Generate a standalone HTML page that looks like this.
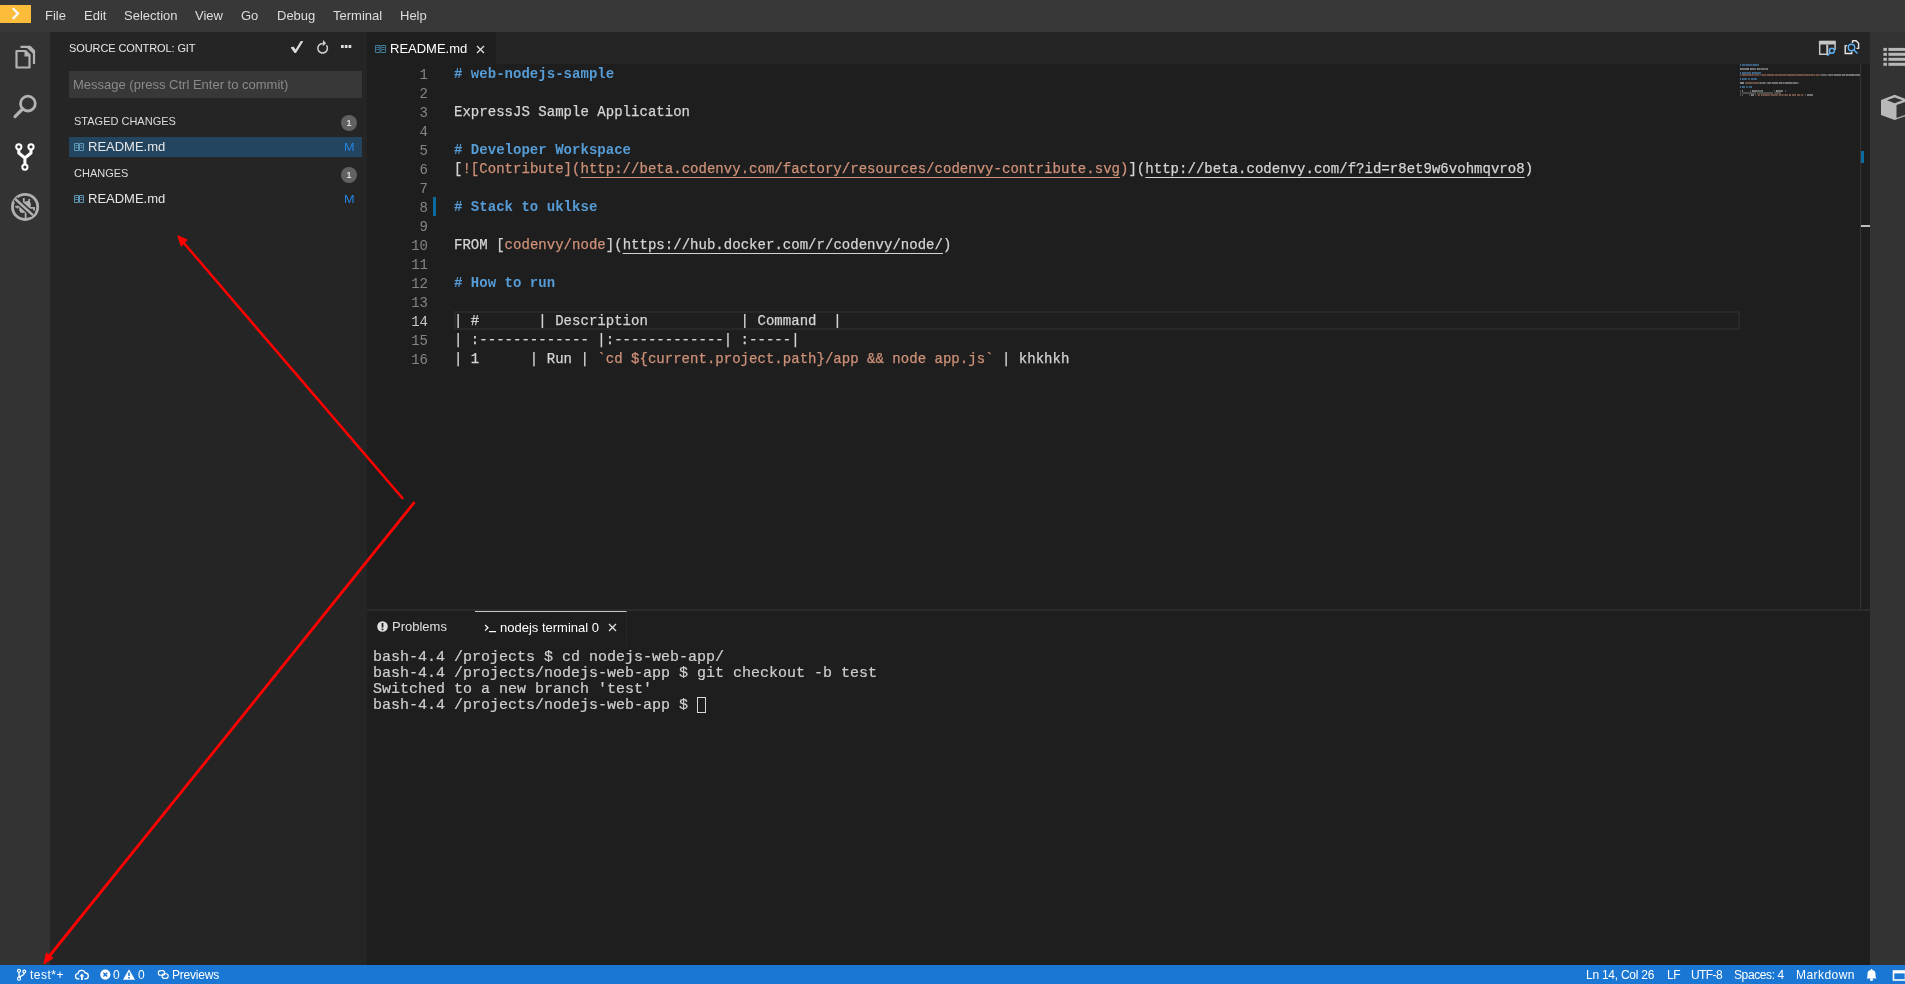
<!DOCTYPE html>
<html><head><meta charset="utf-8"><title>Theia</title>
<style>
*{margin:0;padding:0;box-sizing:border-box}
html,body{-webkit-font-smoothing:antialiased;width:1905px;height:984px;overflow:hidden;background:#1e1e1e;font-family:"Liberation Sans",sans-serif;color:#cccccc}
.abs{position:absolute}
#menubar{left:0;top:0;width:1905px;height:32px;background:#383838}
.mi{position:absolute;top:0;height:32px;line-height:32px;font-size:13px;color:#dddddd;white-space:nowrap}
#logo{left:0;top:5px;width:31px;height:18px;background:#fdbc3a}
#actbar{left:0;top:32px;width:50px;height:933px;background:#333333}
#sidebar{left:50px;top:32px;width:317px;height:933px;background:#252526}
#tabbar{left:367px;top:32px;width:1503px;height:32px;background:#252526}
#tab{left:367px;top:32px;width:129px;height:32px;background:#1e1e1e}
#editor{left:367px;top:64px;width:1503px;height:545px;background:#1e1e1e}
#rbar{left:1870px;top:32px;width:35px;height:933px;background:#333333}
#panel{left:367px;top:609px;width:1503px;height:356px;background:#1e1e1e;border-top:2px solid #2b2b2b}
#status{left:0;top:965px;width:1905px;height:19px;background:#1b77d4}
.code{position:absolute;left:454px;letter-spacing:0.0287px;-webkit-text-stroke:0.25px currentColor;padding-top:1px;font-family:"Liberation Mono",monospace;font-size:14px;line-height:19px;height:19px;white-space:pre;color:#d4d4d4}
.ln{position:absolute;left:380px;padding-top:2px;width:48px;text-align:right;font-family:"Liberation Mono",monospace;font-size:14px;line-height:19px;height:19px;color:#858585}
.h{color:#569cd6;font-weight:bold;-webkit-text-stroke:0}
.o{color:#ce9178}
.u{text-decoration:underline;text-underline-offset:4px}
.cur{color:#c6c6c6}
.term{position:absolute;left:373px;-webkit-text-stroke:0.2px #d8d8d8;font-family:"Liberation Mono",monospace;font-size:15px;line-height:16px;height:16px;white-space:pre;color:#cccccc}
.badge{width:16px;height:16px;border-radius:8px;background:#616161;color:#dcdcdc;font-size:9px;font-weight:bold;text-align:center;line-height:16px}
.st{position:absolute;top:966px;height:19px;line-height:19px;font-size:12px;color:#ffffff;white-space:nowrap}
</style></head>
<body>
<div id="root" style="position:absolute;left:0;top:0;width:1905px;height:984px;will-change:transform">
<div id="menubar" class="abs"></div>
<svg class="abs" style="left:0;top:5px" width="31" height="18" viewBox="0 0 31 18"><rect width="31" height="18" fill="#fdbc3a"/><path d="M12.8 3.3 L18 8.6 L12.8 13.9" fill="none" stroke="#f6f6f6" stroke-width="2.3"/></svg>
<div class="mi" style="left:45px">File</div>
<div class="mi" style="left:84px">Edit</div>
<div class="mi" style="left:124px">Selection</div>
<div class="mi" style="left:195px">View</div>
<div class="mi" style="left:241px">Go</div>
<div class="mi" style="left:277px">Debug</div>
<div class="mi" style="left:333px">Terminal</div>
<div class="mi" style="left:400px">Help</div>

<div id="actbar" class="abs"></div>
<div id="sidebar" class="abs"></div>
<div id="tabbar" class="abs"></div>
<div id="tab" class="abs"></div>
<div id="editor" class="abs"></div>
<div id="rbar" class="abs"></div>
<div id="panel" class="abs"></div>
<div id="status" class="abs"></div>

<!-- ACTBAR -->
<svg class="abs" style="left:0;top:32px" width="50" height="200" viewBox="0 0 50 200">
 <!-- files -->
 <path d="M20.5 14.8 H30 L34 19 V32" fill="none" stroke="#b3b3b3" stroke-width="2.2"/>
 <path d="M28.8 13.7 L35.2 19.6 L32.8 21.5 L26.5 15.5 Z" fill="#b3b3b3"/>
 <path d="M16.5 19 H25.5 L29.5 23 V35.5 H16.5 Z" fill="none" stroke="#b3b3b3" stroke-width="2.2" stroke-linejoin="round"/>
 <path d="M24.5 18.5 V24.5 H30.2 Z" fill="#b3b3b3"/>
 <!-- search -->
 <circle cx="27.9" cy="71.6" r="7.4" fill="none" stroke="#b3b3b3" stroke-width="2.8"/>
 <path d="M22.6 77 L15 84.6" stroke="#b3b3b3" stroke-width="3.2" stroke-linecap="round"/>
 <!-- scm -->
 <circle cx="18.8" cy="114.8" r="2.6" fill="none" stroke="#ffffff" stroke-width="2"/>
 <circle cx="31" cy="114.8" r="2.6" fill="none" stroke="#ffffff" stroke-width="2"/>
 <circle cx="24.9" cy="135.1" r="2.6" fill="none" stroke="#ffffff" stroke-width="2"/>
 <path d="M18.8 117.5 V121 L24.9 126 L31 121 V117.5 M24.9 126 V132.5" fill="none" stroke="#ffffff" stroke-width="3" stroke-linejoin="round"/>
 <!-- debug -->
 <circle cx="25.1" cy="174.9" r="12.6" fill="none" stroke="#b0b0b0" stroke-width="2.8"/>
 <ellipse cx="25" cy="175" rx="4.6" ry="7" transform="rotate(45 25 175)" fill="#b0b0b0"/>
 <path d="M23.8 166 V171.5 M29.5 167 L28.5 171 M15.2 174.6 H20.5 M28.5 175.8 H34 V178.5 M25.6 178 V186 M17.5 174.6 V176.5" fill="none" stroke="#b0b0b0" stroke-width="1.8"/>
 <path d="M15.3 167 L32.9 183.1" stroke="#333333" stroke-width="5.5"/>
 <path d="M15.3 167 L32.9 183.1" stroke="#b0b0b0" stroke-width="2.4"/>
</svg>
<!-- RIGHT BAR -->
<svg class="abs" style="left:1870px;top:32px" width="35" height="100" viewBox="0 0 35 100">
 <rect x="13.4" y="15.9" width="3.5" height="3" fill="#b8b8b8"/><rect x="18.4" y="15.9" width="17" height="3" fill="#b8b8b8"/>
 <rect x="13.4" y="20.8" width="3.5" height="3" fill="#b8b8b8"/><rect x="18.4" y="20.8" width="17" height="3" fill="#b8b8b8"/>
 <rect x="13.4" y="25.8" width="3.5" height="3" fill="#b8b8b8"/><rect x="18.4" y="25.8" width="17" height="3" fill="#b8b8b8"/>
 <rect x="13.4" y="30.8" width="3.5" height="3" fill="#b8b8b8"/><rect x="18.4" y="30.8" width="17" height="3" fill="#b8b8b8"/>
 <path d="M11 68 L24.7 62.8 L38 68 V83 L24.7 88 L11 83 Z" fill="#b8b8b8"/>
 <path d="M17 68.3 L24.7 65.5 L32.5 68.3 L24.7 71.2 Z" fill="#333333"/>
 <path d="M26.5 73 L38 68.8 V82 L26.5 86 Z" fill="#333333"/>
</svg>
<!-- SIDEBAR -->
<div class="abs" style="left:69px;top:32px;height:32px;line-height:32px;font-size:11px;color:#e8e8e8;white-space:nowrap;letter-spacing:-0.1px">SOURCE CONTROL: GIT</div>
<svg class="abs" style="left:286px;top:38px" width="70" height="20" viewBox="0 0 70 20">
 <path d="M4.6 9.6 L7.4 8.5 L9.6 11.6 L14.8 3 L17.3 3.3 L10 15 L8.6 15 Z" fill="#dcdcdc"/>
 <path d="M36.7 5.4 A4.8 4.8 0 1 0 40.4 7.2" fill="none" stroke="#cfcfcf" stroke-width="1.5"/>
 <path d="M37 2 L40.2 5.3 L36.8 8.2 Z" fill="#cfcfcf"/>
 <rect x="55" y="7" width="2.7" height="3" fill="#e0e0e0"/><rect x="58.8" y="7" width="2.7" height="3" fill="#e0e0e0"/><rect x="62.6" y="7" width="2.7" height="3" fill="#e0e0e0"/>
</svg>
<div class="abs" style="left:69px;top:71px;width:293px;height:27px;background:#383838"></div>
<div class="abs" style="left:73px;top:71px;height:27px;line-height:27px;font-size:13px;color:#8a8a8a;white-space:nowrap">Message (press Ctrl Enter to commit)</div>
<div class="abs" style="left:74px;top:112px;height:18px;line-height:18px;font-size:11px;color:#dcdcdc;white-space:nowrap">STAGED CHANGES</div>
<div class="abs badge" style="left:341px;top:115px">1</div>
<div class="abs" style="left:69px;top:137px;width:293px;height:20px;background:#234560"></div>
<svg class="abs fico" style="left:74px;top:143px" width="10" height="8" viewBox="0 0 10 8"><path d="M0.5 0.5h4v7h-4zM5.5 0.5h4v7h-4z" fill="none" stroke="#5d97b3" stroke-width="1"/><path d="M1.5 2.5h2M1.5 4.5h2M6.5 2.5h2M6.5 4.5h2" stroke="#5d97b3" stroke-width="1"/></svg>
<div class="abs" style="left:88px;top:137px;height:20px;line-height:20px;font-size:13px;color:#e6e6e6;white-space:nowrap">README.md</div>
<div class="abs" style="left:344px;top:137px;height:20px;line-height:20px;font-size:11px;color:#2585e0;white-space:nowrap;transform:scaleX(1.15);transform-origin:left">M</div>
<div class="abs" style="left:74px;top:164px;height:18px;line-height:18px;font-size:11px;color:#dcdcdc;white-space:nowrap">CHANGES</div>
<div class="abs badge" style="left:341px;top:167px">1</div>
<svg class="abs fico" style="left:74px;top:195px" width="10" height="8" viewBox="0 0 10 8"><path d="M0.5 0.5h4v7h-4zM5.5 0.5h4v7h-4z" fill="none" stroke="#5d97b3" stroke-width="1"/><path d="M1.5 2.5h2M1.5 4.5h2M6.5 2.5h2M6.5 4.5h2" stroke="#5d97b3" stroke-width="1"/></svg>
<div class="abs" style="left:88px;top:189px;height:20px;line-height:20px;font-size:13px;color:#e6e6e6;white-space:nowrap">README.md</div>
<div class="abs" style="left:344px;top:189px;height:20px;line-height:20px;font-size:11px;color:#2585e0;white-space:nowrap;transform:scaleX(1.15);transform-origin:left">M</div>

<!-- TAB -->
<svg class="abs fico" style="left:375px;top:45px" width="11" height="8" viewBox="0 0 11 8"><path d="M0.5 0.5h4.5v7h-4.5zM6 0.5h4.5v7h-4.5z" fill="none" stroke="#3f7b97" stroke-width="1"/><path d="M1.5 2.5h2.5M1.5 4.5h2.5M7 2.5h2.5M7 4.5h2.5" stroke="#3f7b97" stroke-width="1"/></svg>
<div class="abs" style="left:390px;top:33px;height:32px;line-height:32px;font-size:13px;color:#ffffff;white-space:nowrap">README.md</div>
<svg class="abs" style="left:476px;top:45px" width="9" height="9" viewBox="0 0 9 9"><path d="M1 1 L8 8 M8 1 L1 8" stroke="#e0e0e0" stroke-width="1.3"/></svg>
<svg class="abs" style="left:1815px;top:36px" width="50" height="24" viewBox="0 0 50 24">
 <path d="M4.9 5.5 H20.1 V14" fill="none" stroke="#c6c6c6" stroke-width="1.5"/>
 <rect x="3.9" y="4.9" width="16.2" height="3.6" fill="#c6c6c6"/>
 <path d="M4.7 5 V18.3 H12.5 V8.5 M12 8.5 V18" fill="none" stroke="#c6c6c6" stroke-width="1.5"/>
 <circle cx="16.9" cy="14.8" r="2.5" fill="none" stroke="#5fb0f5" stroke-width="1.4"/>
 <path d="M15.1 16.7 L12.3 19.9" stroke="#5fb0f5" stroke-width="1.4"/>
 <path d="M37.5 4.8 H41 L43.6 7.3 V12.4 H41.5 M30.5 9.6 H32.2 M30.2 9.3 V17.5 H36.7 V15.5" fill="none" stroke="#e6e6e6" stroke-width="1.4"/>
 <path d="M37.5 4.5 V7" stroke="#e6e6e6" stroke-width="1.4"/>
 <circle cx="36.5" cy="11.4" r="3.2" fill="none" stroke="#5fb0f5" stroke-width="1.4"/>
 <path d="M38.8 13.8 L42.5 17.5" stroke="#5fb0f5" stroke-width="1.4"/>
</svg>
<!-- EDITOR -->
<div class="ln" style="top:64px">1</div>
<div class="code" style="top:64px"><span class="h"># web-nodejs-sample</span></div>
<div class="ln" style="top:83px">2</div>
<div class="ln" style="top:102px">3</div>
<div class="code" style="top:102px">ExpressJS Sample Application</div>
<div class="ln" style="top:121px">4</div>
<div class="ln" style="top:140px">5</div>
<div class="code" style="top:140px"><span class="h"># Developer Workspace</span></div>
<div class="ln" style="top:159px">6</div>
<div class="code" style="top:159px">[<span class="o">![Contribute](</span><span class="o u">http://beta.codenvy.com/factory/resources/codenvy-contribute.svg</span><span class="o">)</span>](<span class="u">http://beta.codenvy.com/f?id=r8et9w6vohmqvro8</span>)</div>
<div class="ln" style="top:178px">7</div>
<div class="ln" style="top:197px">8</div>
<div class="code" style="top:197px"><span class="h"># Stack to uklkse</span></div>
<div class="ln" style="top:216px">9</div>
<div class="ln" style="top:235px">10</div>
<div class="code" style="top:235px">FROM [<span class="o">codenvy/node</span>](<span class="u">https://hub.docker.com/r/codenvy/node/</span>)</div>
<div class="ln" style="top:254px">11</div>
<div class="ln" style="top:273px">12</div>
<div class="code" style="top:273px"><span class="h"># How to run</span></div>
<div class="ln" style="top:292px">13</div>
<div class="ln cur" style="top:311px">14</div>
<div class="code" style="top:311px">| #       | Description           | Command  |</div>
<div class="ln" style="top:330px">15</div>
<div class="code" style="top:330px">| :------------- |:-------------| :-----|</div>
<div class="ln" style="top:349px">16</div>
<div class="code" style="top:349px">| 1      | Run | <span class="o">`cd ${current.project.path}/app &amp;&amp; node app.js`</span> | khkhkh</div>
<div class="abs" style="left:433px;top:197px;width:3px;height:19px;background:#0c6b9e"></div>
<div class="abs" style="left:454px;top:311px;width:1286px;height:19px;border:2px solid #282828"></div>
<div class="abs" style="left:1860px;top:64px;width:1px;height:545px;background:#333333"></div>
<div class="abs" style="left:1861px;top:151px;width:3px;height:12px;background:#0c6b9e"></div>
<div class="abs" style="left:1861px;top:225px;width:9px;height:2px;background:#bdbdbd"></div>
<!-- MINIMAP --><svg class="abs" style="left:1740px;top:64px;opacity:0.75" width="120" height="34" viewBox="0 0 120 34" shape-rendering="crispEdges"><rect x="0" y="0" width="1" height="2" fill="#569cd6" fill-opacity="0.86"/><rect x="2" y="0" width="1" height="2" fill="#569cd6" fill-opacity="0.69"/><rect x="3" y="0" width="1" height="2" fill="#569cd6" fill-opacity="0.69"/><rect x="4" y="0" width="1" height="2" fill="#569cd6" fill-opacity="0.69"/><rect x="5" y="0" width="1" height="2" fill="#569cd6" fill-opacity="0.40"/><rect x="6" y="0" width="1" height="2" fill="#569cd6" fill-opacity="0.69"/><rect x="7" y="0" width="1" height="2" fill="#569cd6" fill-opacity="0.69"/><rect x="8" y="0" width="1" height="2" fill="#569cd6" fill-opacity="0.69"/><rect x="9" y="0" width="1" height="2" fill="#569cd6" fill-opacity="0.69"/><rect x="10" y="0" width="1" height="2" fill="#569cd6" fill-opacity="0.52"/><rect x="11" y="0" width="1" height="2" fill="#569cd6" fill-opacity="0.69"/><rect x="12" y="0" width="1" height="2" fill="#569cd6" fill-opacity="0.40"/><rect x="13" y="0" width="1" height="2" fill="#569cd6" fill-opacity="0.69"/><rect x="14" y="0" width="1" height="2" fill="#569cd6" fill-opacity="0.69"/><rect x="15" y="0" width="1" height="2" fill="#569cd6" fill-opacity="0.69"/><rect x="16" y="0" width="1" height="2" fill="#569cd6" fill-opacity="0.69"/><rect x="17" y="0" width="1" height="2" fill="#569cd6" fill-opacity="0.52"/><rect x="18" y="0" width="1" height="2" fill="#569cd6" fill-opacity="0.69"/><rect x="0" y="4" width="1" height="2" fill="#d4d4d4" fill-opacity="0.75"/><rect x="1" y="4" width="1" height="2" fill="#d4d4d4" fill-opacity="0.60"/><rect x="2" y="4" width="1" height="2" fill="#d4d4d4" fill-opacity="0.60"/><rect x="3" y="4" width="1" height="2" fill="#d4d4d4" fill-opacity="0.60"/><rect x="4" y="4" width="1" height="2" fill="#d4d4d4" fill-opacity="0.60"/><rect x="5" y="4" width="1" height="2" fill="#d4d4d4" fill-opacity="0.60"/><rect x="6" y="4" width="1" height="2" fill="#d4d4d4" fill-opacity="0.60"/><rect x="7" y="4" width="1" height="2" fill="#d4d4d4" fill-opacity="0.75"/><rect x="8" y="4" width="1" height="2" fill="#d4d4d4" fill-opacity="0.75"/><rect x="10" y="4" width="1" height="2" fill="#d4d4d4" fill-opacity="0.75"/><rect x="11" y="4" width="1" height="2" fill="#d4d4d4" fill-opacity="0.60"/><rect x="12" y="4" width="1" height="2" fill="#d4d4d4" fill-opacity="0.60"/><rect x="13" y="4" width="1" height="2" fill="#d4d4d4" fill-opacity="0.60"/><rect x="14" y="4" width="1" height="2" fill="#d4d4d4" fill-opacity="0.45"/><rect x="15" y="4" width="1" height="2" fill="#d4d4d4" fill-opacity="0.60"/><rect x="17" y="4" width="1" height="2" fill="#d4d4d4" fill-opacity="0.75"/><rect x="18" y="4" width="1" height="2" fill="#d4d4d4" fill-opacity="0.60"/><rect x="19" y="4" width="1" height="2" fill="#d4d4d4" fill-opacity="0.60"/><rect x="20" y="4" width="1" height="2" fill="#d4d4d4" fill-opacity="0.45"/><rect x="21" y="4" width="1" height="2" fill="#d4d4d4" fill-opacity="0.45"/><rect x="22" y="4" width="1" height="2" fill="#d4d4d4" fill-opacity="0.60"/><rect x="23" y="4" width="1" height="2" fill="#d4d4d4" fill-opacity="0.60"/><rect x="24" y="4" width="1" height="2" fill="#d4d4d4" fill-opacity="0.45"/><rect x="25" y="4" width="1" height="2" fill="#d4d4d4" fill-opacity="0.45"/><rect x="26" y="4" width="1" height="2" fill="#d4d4d4" fill-opacity="0.60"/><rect x="27" y="4" width="1" height="2" fill="#d4d4d4" fill-opacity="0.60"/><rect x="0" y="8" width="1" height="2" fill="#569cd6" fill-opacity="0.86"/><rect x="2" y="8" width="1" height="2" fill="#569cd6" fill-opacity="0.86"/><rect x="3" y="8" width="1" height="2" fill="#569cd6" fill-opacity="0.69"/><rect x="4" y="8" width="1" height="2" fill="#569cd6" fill-opacity="0.69"/><rect x="5" y="8" width="1" height="2" fill="#569cd6" fill-opacity="0.69"/><rect x="6" y="8" width="1" height="2" fill="#569cd6" fill-opacity="0.52"/><rect x="7" y="8" width="1" height="2" fill="#569cd6" fill-opacity="0.69"/><rect x="8" y="8" width="1" height="2" fill="#569cd6" fill-opacity="0.69"/><rect x="9" y="8" width="1" height="2" fill="#569cd6" fill-opacity="0.69"/><rect x="10" y="8" width="1" height="2" fill="#569cd6" fill-opacity="0.69"/><rect x="12" y="8" width="1" height="2" fill="#569cd6" fill-opacity="0.86"/><rect x="13" y="8" width="1" height="2" fill="#569cd6" fill-opacity="0.69"/><rect x="14" y="8" width="1" height="2" fill="#569cd6" fill-opacity="0.69"/><rect x="15" y="8" width="1" height="2" fill="#569cd6" fill-opacity="0.69"/><rect x="16" y="8" width="1" height="2" fill="#569cd6" fill-opacity="0.69"/><rect x="17" y="8" width="1" height="2" fill="#569cd6" fill-opacity="0.69"/><rect x="18" y="8" width="1" height="2" fill="#569cd6" fill-opacity="0.69"/><rect x="19" y="8" width="1" height="2" fill="#569cd6" fill-opacity="0.69"/><rect x="20" y="8" width="1" height="2" fill="#569cd6" fill-opacity="0.69"/><rect x="0" y="10" width="1" height="2" fill="#d4d4d4" fill-opacity="0.35"/><rect x="1" y="10" width="1" height="2" fill="#ce9178" fill-opacity="0.35"/><rect x="2" y="10" width="1" height="2" fill="#ce9178" fill-opacity="0.35"/><rect x="3" y="10" width="1" height="2" fill="#ce9178" fill-opacity="0.75"/><rect x="4" y="10" width="1" height="2" fill="#ce9178" fill-opacity="0.60"/><rect x="5" y="10" width="1" height="2" fill="#ce9178" fill-opacity="0.60"/><rect x="6" y="10" width="1" height="2" fill="#ce9178" fill-opacity="0.45"/><rect x="7" y="10" width="1" height="2" fill="#ce9178" fill-opacity="0.60"/><rect x="8" y="10" width="1" height="2" fill="#ce9178" fill-opacity="0.45"/><rect x="9" y="10" width="1" height="2" fill="#ce9178" fill-opacity="0.60"/><rect x="10" y="10" width="1" height="2" fill="#ce9178" fill-opacity="0.60"/><rect x="11" y="10" width="1" height="2" fill="#ce9178" fill-opacity="0.45"/><rect x="12" y="10" width="1" height="2" fill="#ce9178" fill-opacity="0.60"/><rect x="13" y="10" width="1" height="2" fill="#ce9178" fill-opacity="0.35"/><rect x="14" y="10" width="1" height="2" fill="#ce9178" fill-opacity="0.35"/><rect x="15" y="10" width="1" height="2" fill="#ce9178" fill-opacity="0.60"/><rect x="16" y="10" width="1" height="2" fill="#ce9178" fill-opacity="0.45"/><rect x="17" y="10" width="1" height="2" fill="#ce9178" fill-opacity="0.45"/><rect x="18" y="10" width="1" height="2" fill="#ce9178" fill-opacity="0.60"/><rect x="19" y="10" width="1" height="2" fill="#ce9178" fill-opacity="0.22"/><rect x="20" y="10" width="1" height="2" fill="#ce9178" fill-opacity="0.35"/><rect x="21" y="10" width="1" height="2" fill="#ce9178" fill-opacity="0.35"/><rect x="22" y="10" width="1" height="2" fill="#ce9178" fill-opacity="0.60"/><rect x="23" y="10" width="1" height="2" fill="#ce9178" fill-opacity="0.60"/><rect x="24" y="10" width="1" height="2" fill="#ce9178" fill-opacity="0.45"/><rect x="25" y="10" width="1" height="2" fill="#ce9178" fill-opacity="0.60"/><rect x="26" y="10" width="1" height="2" fill="#ce9178" fill-opacity="0.22"/><rect x="27" y="10" width="1" height="2" fill="#ce9178" fill-opacity="0.60"/><rect x="28" y="10" width="1" height="2" fill="#ce9178" fill-opacity="0.60"/><rect x="29" y="10" width="1" height="2" fill="#ce9178" fill-opacity="0.60"/><rect x="30" y="10" width="1" height="2" fill="#ce9178" fill-opacity="0.60"/><rect x="31" y="10" width="1" height="2" fill="#ce9178" fill-opacity="0.60"/><rect x="32" y="10" width="1" height="2" fill="#ce9178" fill-opacity="0.60"/><rect x="33" y="10" width="1" height="2" fill="#ce9178" fill-opacity="0.60"/><rect x="34" y="10" width="1" height="2" fill="#ce9178" fill-opacity="0.22"/><rect x="35" y="10" width="1" height="2" fill="#ce9178" fill-opacity="0.60"/><rect x="36" y="10" width="1" height="2" fill="#ce9178" fill-opacity="0.60"/><rect x="37" y="10" width="1" height="2" fill="#ce9178" fill-opacity="0.60"/><rect x="38" y="10" width="1" height="2" fill="#ce9178" fill-opacity="0.35"/><rect x="39" y="10" width="1" height="2" fill="#ce9178" fill-opacity="0.60"/><rect x="40" y="10" width="1" height="2" fill="#ce9178" fill-opacity="0.60"/><rect x="41" y="10" width="1" height="2" fill="#ce9178" fill-opacity="0.60"/><rect x="42" y="10" width="1" height="2" fill="#ce9178" fill-opacity="0.45"/><rect x="43" y="10" width="1" height="2" fill="#ce9178" fill-opacity="0.60"/><rect x="44" y="10" width="1" height="2" fill="#ce9178" fill-opacity="0.60"/><rect x="45" y="10" width="1" height="2" fill="#ce9178" fill-opacity="0.60"/><rect x="46" y="10" width="1" height="2" fill="#ce9178" fill-opacity="0.35"/><rect x="47" y="10" width="1" height="2" fill="#ce9178" fill-opacity="0.60"/><rect x="48" y="10" width="1" height="2" fill="#ce9178" fill-opacity="0.60"/><rect x="49" y="10" width="1" height="2" fill="#ce9178" fill-opacity="0.60"/><rect x="50" y="10" width="1" height="2" fill="#ce9178" fill-opacity="0.60"/><rect x="51" y="10" width="1" height="2" fill="#ce9178" fill-opacity="0.60"/><rect x="52" y="10" width="1" height="2" fill="#ce9178" fill-opacity="0.60"/><rect x="53" y="10" width="1" height="2" fill="#ce9178" fill-opacity="0.60"/><rect x="54" y="10" width="1" height="2" fill="#ce9178" fill-opacity="0.60"/><rect x="55" y="10" width="1" height="2" fill="#ce9178" fill-opacity="0.60"/><rect x="56" y="10" width="1" height="2" fill="#ce9178" fill-opacity="0.35"/><rect x="57" y="10" width="1" height="2" fill="#ce9178" fill-opacity="0.60"/><rect x="58" y="10" width="1" height="2" fill="#ce9178" fill-opacity="0.60"/><rect x="59" y="10" width="1" height="2" fill="#ce9178" fill-opacity="0.60"/><rect x="60" y="10" width="1" height="2" fill="#ce9178" fill-opacity="0.60"/><rect x="61" y="10" width="1" height="2" fill="#ce9178" fill-opacity="0.60"/><rect x="62" y="10" width="1" height="2" fill="#ce9178" fill-opacity="0.60"/><rect x="63" y="10" width="1" height="2" fill="#ce9178" fill-opacity="0.60"/><rect x="64" y="10" width="1" height="2" fill="#ce9178" fill-opacity="0.35"/><rect x="65" y="10" width="1" height="2" fill="#ce9178" fill-opacity="0.60"/><rect x="66" y="10" width="1" height="2" fill="#ce9178" fill-opacity="0.60"/><rect x="67" y="10" width="1" height="2" fill="#ce9178" fill-opacity="0.60"/><rect x="68" y="10" width="1" height="2" fill="#ce9178" fill-opacity="0.45"/><rect x="69" y="10" width="1" height="2" fill="#ce9178" fill-opacity="0.60"/><rect x="70" y="10" width="1" height="2" fill="#ce9178" fill-opacity="0.45"/><rect x="71" y="10" width="1" height="2" fill="#ce9178" fill-opacity="0.60"/><rect x="72" y="10" width="1" height="2" fill="#ce9178" fill-opacity="0.60"/><rect x="73" y="10" width="1" height="2" fill="#ce9178" fill-opacity="0.45"/><rect x="74" y="10" width="1" height="2" fill="#ce9178" fill-opacity="0.60"/><rect x="75" y="10" width="1" height="2" fill="#ce9178" fill-opacity="0.22"/><rect x="76" y="10" width="1" height="2" fill="#ce9178" fill-opacity="0.60"/><rect x="77" y="10" width="1" height="2" fill="#ce9178" fill-opacity="0.60"/><rect x="78" y="10" width="1" height="2" fill="#ce9178" fill-opacity="0.60"/><rect x="79" y="10" width="1" height="2" fill="#ce9178" fill-opacity="0.35"/><rect x="80" y="10" width="1" height="2" fill="#d4d4d4" fill-opacity="0.35"/><rect x="81" y="10" width="1" height="2" fill="#d4d4d4" fill-opacity="0.35"/><rect x="82" y="10" width="1" height="2" fill="#d4d4d4" fill-opacity="0.60"/><rect x="83" y="10" width="1" height="2" fill="#d4d4d4" fill-opacity="0.45"/><rect x="84" y="10" width="1" height="2" fill="#d4d4d4" fill-opacity="0.45"/><rect x="85" y="10" width="1" height="2" fill="#d4d4d4" fill-opacity="0.60"/><rect x="86" y="10" width="1" height="2" fill="#d4d4d4" fill-opacity="0.22"/><rect x="87" y="10" width="1" height="2" fill="#d4d4d4" fill-opacity="0.35"/><rect x="88" y="10" width="1" height="2" fill="#d4d4d4" fill-opacity="0.35"/><rect x="89" y="10" width="1" height="2" fill="#d4d4d4" fill-opacity="0.60"/><rect x="90" y="10" width="1" height="2" fill="#d4d4d4" fill-opacity="0.60"/><rect x="91" y="10" width="1" height="2" fill="#d4d4d4" fill-opacity="0.45"/><rect x="92" y="10" width="1" height="2" fill="#d4d4d4" fill-opacity="0.60"/><rect x="93" y="10" width="1" height="2" fill="#d4d4d4" fill-opacity="0.22"/><rect x="94" y="10" width="1" height="2" fill="#d4d4d4" fill-opacity="0.60"/><rect x="95" y="10" width="1" height="2" fill="#d4d4d4" fill-opacity="0.60"/><rect x="96" y="10" width="1" height="2" fill="#d4d4d4" fill-opacity="0.60"/><rect x="97" y="10" width="1" height="2" fill="#d4d4d4" fill-opacity="0.60"/><rect x="98" y="10" width="1" height="2" fill="#d4d4d4" fill-opacity="0.60"/><rect x="99" y="10" width="1" height="2" fill="#d4d4d4" fill-opacity="0.60"/><rect x="100" y="10" width="1" height="2" fill="#d4d4d4" fill-opacity="0.60"/><rect x="101" y="10" width="1" height="2" fill="#d4d4d4" fill-opacity="0.22"/><rect x="102" y="10" width="1" height="2" fill="#d4d4d4" fill-opacity="0.60"/><rect x="103" y="10" width="1" height="2" fill="#d4d4d4" fill-opacity="0.60"/><rect x="104" y="10" width="1" height="2" fill="#d4d4d4" fill-opacity="0.60"/><rect x="105" y="10" width="1" height="2" fill="#d4d4d4" fill-opacity="0.35"/><rect x="106" y="10" width="1" height="2" fill="#d4d4d4" fill-opacity="0.60"/><rect x="107" y="10" width="1" height="2" fill="#d4d4d4" fill-opacity="0.60"/><rect x="108" y="10" width="1" height="2" fill="#d4d4d4" fill-opacity="0.45"/><rect x="109" y="10" width="1" height="2" fill="#d4d4d4" fill-opacity="0.60"/><rect x="110" y="10" width="1" height="2" fill="#d4d4d4" fill-opacity="0.60"/><rect x="111" y="10" width="1" height="2" fill="#d4d4d4" fill-opacity="0.60"/><rect x="112" y="10" width="1" height="2" fill="#d4d4d4" fill-opacity="0.75"/><rect x="113" y="10" width="1" height="2" fill="#d4d4d4" fill-opacity="0.60"/><rect x="114" y="10" width="1" height="2" fill="#d4d4d4" fill-opacity="0.45"/><rect x="115" y="10" width="1" height="2" fill="#d4d4d4" fill-opacity="0.60"/><rect x="116" y="10" width="1" height="2" fill="#d4d4d4" fill-opacity="0.60"/><rect x="117" y="10" width="1" height="2" fill="#d4d4d4" fill-opacity="0.60"/><rect x="118" y="10" width="1" height="2" fill="#d4d4d4" fill-opacity="0.60"/><rect x="119" y="10" width="1" height="2" fill="#d4d4d4" fill-opacity="0.60"/><rect x="120" y="10" width="1" height="2" fill="#d4d4d4" fill-opacity="0.60"/><rect x="121" y="10" width="1" height="2" fill="#d4d4d4" fill-opacity="0.60"/><rect x="122" y="10" width="1" height="2" fill="#d4d4d4" fill-opacity="0.60"/><rect x="123" y="10" width="1" height="2" fill="#d4d4d4" fill-opacity="0.60"/><rect x="124" y="10" width="1" height="2" fill="#d4d4d4" fill-opacity="0.60"/><rect x="125" y="10" width="1" height="2" fill="#d4d4d4" fill-opacity="0.60"/><rect x="126" y="10" width="1" height="2" fill="#d4d4d4" fill-opacity="0.75"/><rect x="127" y="10" width="1" height="2" fill="#d4d4d4" fill-opacity="0.35"/><rect x="0" y="14" width="1" height="2" fill="#569cd6" fill-opacity="0.86"/><rect x="2" y="14" width="1" height="2" fill="#569cd6" fill-opacity="0.86"/><rect x="3" y="14" width="1" height="2" fill="#569cd6" fill-opacity="0.52"/><rect x="4" y="14" width="1" height="2" fill="#569cd6" fill-opacity="0.69"/><rect x="5" y="14" width="1" height="2" fill="#569cd6" fill-opacity="0.69"/><rect x="6" y="14" width="1" height="2" fill="#569cd6" fill-opacity="0.69"/><rect x="8" y="14" width="1" height="2" fill="#569cd6" fill-opacity="0.52"/><rect x="9" y="14" width="1" height="2" fill="#569cd6" fill-opacity="0.69"/><rect x="11" y="14" width="1" height="2" fill="#569cd6" fill-opacity="0.69"/><rect x="12" y="14" width="1" height="2" fill="#569cd6" fill-opacity="0.69"/><rect x="13" y="14" width="1" height="2" fill="#569cd6" fill-opacity="0.52"/><rect x="14" y="14" width="1" height="2" fill="#569cd6" fill-opacity="0.69"/><rect x="15" y="14" width="1" height="2" fill="#569cd6" fill-opacity="0.69"/><rect x="16" y="14" width="1" height="2" fill="#569cd6" fill-opacity="0.69"/><rect x="0" y="18" width="1" height="2" fill="#d4d4d4" fill-opacity="0.75"/><rect x="1" y="18" width="1" height="2" fill="#d4d4d4" fill-opacity="0.75"/><rect x="2" y="18" width="1" height="2" fill="#d4d4d4" fill-opacity="0.75"/><rect x="3" y="18" width="1" height="2" fill="#d4d4d4" fill-opacity="0.75"/><rect x="5" y="18" width="1" height="2" fill="#d4d4d4" fill-opacity="0.35"/><rect x="6" y="18" width="1" height="2" fill="#ce9178" fill-opacity="0.60"/><rect x="7" y="18" width="1" height="2" fill="#ce9178" fill-opacity="0.60"/><rect x="8" y="18" width="1" height="2" fill="#ce9178" fill-opacity="0.60"/><rect x="9" y="18" width="1" height="2" fill="#ce9178" fill-opacity="0.60"/><rect x="10" y="18" width="1" height="2" fill="#ce9178" fill-opacity="0.60"/><rect x="11" y="18" width="1" height="2" fill="#ce9178" fill-opacity="0.60"/><rect x="12" y="18" width="1" height="2" fill="#ce9178" fill-opacity="0.60"/><rect x="13" y="18" width="1" height="2" fill="#ce9178" fill-opacity="0.35"/><rect x="14" y="18" width="1" height="2" fill="#ce9178" fill-opacity="0.60"/><rect x="15" y="18" width="1" height="2" fill="#ce9178" fill-opacity="0.60"/><rect x="16" y="18" width="1" height="2" fill="#ce9178" fill-opacity="0.60"/><rect x="17" y="18" width="1" height="2" fill="#ce9178" fill-opacity="0.60"/><rect x="18" y="18" width="1" height="2" fill="#d4d4d4" fill-opacity="0.35"/><rect x="19" y="18" width="1" height="2" fill="#d4d4d4" fill-opacity="0.35"/><rect x="20" y="18" width="1" height="2" fill="#d4d4d4" fill-opacity="0.60"/><rect x="21" y="18" width="1" height="2" fill="#d4d4d4" fill-opacity="0.45"/><rect x="22" y="18" width="1" height="2" fill="#d4d4d4" fill-opacity="0.45"/><rect x="23" y="18" width="1" height="2" fill="#d4d4d4" fill-opacity="0.60"/><rect x="24" y="18" width="1" height="2" fill="#d4d4d4" fill-opacity="0.60"/><rect x="25" y="18" width="1" height="2" fill="#d4d4d4" fill-opacity="0.22"/><rect x="26" y="18" width="1" height="2" fill="#d4d4d4" fill-opacity="0.35"/><rect x="27" y="18" width="1" height="2" fill="#d4d4d4" fill-opacity="0.35"/><rect x="28" y="18" width="1" height="2" fill="#d4d4d4" fill-opacity="0.60"/><rect x="29" y="18" width="1" height="2" fill="#d4d4d4" fill-opacity="0.60"/><rect x="30" y="18" width="1" height="2" fill="#d4d4d4" fill-opacity="0.60"/><rect x="31" y="18" width="1" height="2" fill="#d4d4d4" fill-opacity="0.22"/><rect x="32" y="18" width="1" height="2" fill="#d4d4d4" fill-opacity="0.60"/><rect x="33" y="18" width="1" height="2" fill="#d4d4d4" fill-opacity="0.60"/><rect x="34" y="18" width="1" height="2" fill="#d4d4d4" fill-opacity="0.60"/><rect x="35" y="18" width="1" height="2" fill="#d4d4d4" fill-opacity="0.60"/><rect x="36" y="18" width="1" height="2" fill="#d4d4d4" fill-opacity="0.60"/><rect x="37" y="18" width="1" height="2" fill="#d4d4d4" fill-opacity="0.60"/><rect x="38" y="18" width="1" height="2" fill="#d4d4d4" fill-opacity="0.22"/><rect x="39" y="18" width="1" height="2" fill="#d4d4d4" fill-opacity="0.60"/><rect x="40" y="18" width="1" height="2" fill="#d4d4d4" fill-opacity="0.60"/><rect x="41" y="18" width="1" height="2" fill="#d4d4d4" fill-opacity="0.60"/><rect x="42" y="18" width="1" height="2" fill="#d4d4d4" fill-opacity="0.35"/><rect x="43" y="18" width="1" height="2" fill="#d4d4d4" fill-opacity="0.60"/><rect x="44" y="18" width="1" height="2" fill="#d4d4d4" fill-opacity="0.35"/><rect x="45" y="18" width="1" height="2" fill="#d4d4d4" fill-opacity="0.60"/><rect x="46" y="18" width="1" height="2" fill="#d4d4d4" fill-opacity="0.60"/><rect x="47" y="18" width="1" height="2" fill="#d4d4d4" fill-opacity="0.60"/><rect x="48" y="18" width="1" height="2" fill="#d4d4d4" fill-opacity="0.60"/><rect x="49" y="18" width="1" height="2" fill="#d4d4d4" fill-opacity="0.60"/><rect x="50" y="18" width="1" height="2" fill="#d4d4d4" fill-opacity="0.60"/><rect x="51" y="18" width="1" height="2" fill="#d4d4d4" fill-opacity="0.60"/><rect x="52" y="18" width="1" height="2" fill="#d4d4d4" fill-opacity="0.35"/><rect x="53" y="18" width="1" height="2" fill="#d4d4d4" fill-opacity="0.60"/><rect x="54" y="18" width="1" height="2" fill="#d4d4d4" fill-opacity="0.60"/><rect x="55" y="18" width="1" height="2" fill="#d4d4d4" fill-opacity="0.60"/><rect x="56" y="18" width="1" height="2" fill="#d4d4d4" fill-opacity="0.60"/><rect x="57" y="18" width="1" height="2" fill="#d4d4d4" fill-opacity="0.35"/><rect x="58" y="18" width="1" height="2" fill="#d4d4d4" fill-opacity="0.35"/><rect x="0" y="22" width="1" height="2" fill="#569cd6" fill-opacity="0.86"/><rect x="2" y="22" width="1" height="2" fill="#569cd6" fill-opacity="0.86"/><rect x="3" y="22" width="1" height="2" fill="#569cd6" fill-opacity="0.69"/><rect x="4" y="22" width="1" height="2" fill="#569cd6" fill-opacity="0.69"/><rect x="6" y="22" width="1" height="2" fill="#569cd6" fill-opacity="0.52"/><rect x="7" y="22" width="1" height="2" fill="#569cd6" fill-opacity="0.69"/><rect x="9" y="22" width="1" height="2" fill="#569cd6" fill-opacity="0.69"/><rect x="10" y="22" width="1" height="2" fill="#569cd6" fill-opacity="0.69"/><rect x="11" y="22" width="1" height="2" fill="#569cd6" fill-opacity="0.69"/><rect x="0" y="26" width="1" height="2" fill="#d4d4d4" fill-opacity="0.35"/><rect x="2" y="26" width="1" height="2" fill="#d4d4d4" fill-opacity="0.75"/><rect x="10" y="26" width="1" height="2" fill="#d4d4d4" fill-opacity="0.35"/><rect x="12" y="26" width="1" height="2" fill="#d4d4d4" fill-opacity="0.75"/><rect x="13" y="26" width="1" height="2" fill="#d4d4d4" fill-opacity="0.60"/><rect x="14" y="26" width="1" height="2" fill="#d4d4d4" fill-opacity="0.60"/><rect x="15" y="26" width="1" height="2" fill="#d4d4d4" fill-opacity="0.60"/><rect x="16" y="26" width="1" height="2" fill="#d4d4d4" fill-opacity="0.60"/><rect x="17" y="26" width="1" height="2" fill="#d4d4d4" fill-opacity="0.45"/><rect x="18" y="26" width="1" height="2" fill="#d4d4d4" fill-opacity="0.60"/><rect x="19" y="26" width="1" height="2" fill="#d4d4d4" fill-opacity="0.45"/><rect x="20" y="26" width="1" height="2" fill="#d4d4d4" fill-opacity="0.45"/><rect x="21" y="26" width="1" height="2" fill="#d4d4d4" fill-opacity="0.60"/><rect x="22" y="26" width="1" height="2" fill="#d4d4d4" fill-opacity="0.60"/><rect x="34" y="26" width="1" height="2" fill="#d4d4d4" fill-opacity="0.35"/><rect x="36" y="26" width="1" height="2" fill="#d4d4d4" fill-opacity="0.75"/><rect x="37" y="26" width="1" height="2" fill="#d4d4d4" fill-opacity="0.60"/><rect x="38" y="26" width="1" height="2" fill="#d4d4d4" fill-opacity="0.60"/><rect x="39" y="26" width="1" height="2" fill="#d4d4d4" fill-opacity="0.60"/><rect x="40" y="26" width="1" height="2" fill="#d4d4d4" fill-opacity="0.60"/><rect x="41" y="26" width="1" height="2" fill="#d4d4d4" fill-opacity="0.60"/><rect x="42" y="26" width="1" height="2" fill="#d4d4d4" fill-opacity="0.60"/><rect x="45" y="26" width="1" height="2" fill="#d4d4d4" fill-opacity="0.35"/><rect x="0" y="28" width="1" height="2" fill="#d4d4d4" fill-opacity="0.35"/><rect x="2" y="28" width="1" height="2" fill="#d4d4d4" fill-opacity="0.22"/><rect x="3" y="28" width="1" height="2" fill="#d4d4d4" fill-opacity="0.35"/><rect x="4" y="28" width="1" height="2" fill="#d4d4d4" fill-opacity="0.35"/><rect x="5" y="28" width="1" height="2" fill="#d4d4d4" fill-opacity="0.35"/><rect x="6" y="28" width="1" height="2" fill="#d4d4d4" fill-opacity="0.35"/><rect x="7" y="28" width="1" height="2" fill="#d4d4d4" fill-opacity="0.35"/><rect x="8" y="28" width="1" height="2" fill="#d4d4d4" fill-opacity="0.35"/><rect x="9" y="28" width="1" height="2" fill="#d4d4d4" fill-opacity="0.35"/><rect x="10" y="28" width="1" height="2" fill="#d4d4d4" fill-opacity="0.35"/><rect x="11" y="28" width="1" height="2" fill="#d4d4d4" fill-opacity="0.35"/><rect x="12" y="28" width="1" height="2" fill="#d4d4d4" fill-opacity="0.35"/><rect x="13" y="28" width="1" height="2" fill="#d4d4d4" fill-opacity="0.35"/><rect x="14" y="28" width="1" height="2" fill="#d4d4d4" fill-opacity="0.35"/><rect x="15" y="28" width="1" height="2" fill="#d4d4d4" fill-opacity="0.35"/><rect x="17" y="28" width="1" height="2" fill="#d4d4d4" fill-opacity="0.35"/><rect x="18" y="28" width="1" height="2" fill="#d4d4d4" fill-opacity="0.22"/><rect x="19" y="28" width="1" height="2" fill="#d4d4d4" fill-opacity="0.35"/><rect x="20" y="28" width="1" height="2" fill="#d4d4d4" fill-opacity="0.35"/><rect x="21" y="28" width="1" height="2" fill="#d4d4d4" fill-opacity="0.35"/><rect x="22" y="28" width="1" height="2" fill="#d4d4d4" fill-opacity="0.35"/><rect x="23" y="28" width="1" height="2" fill="#d4d4d4" fill-opacity="0.35"/><rect x="24" y="28" width="1" height="2" fill="#d4d4d4" fill-opacity="0.35"/><rect x="25" y="28" width="1" height="2" fill="#d4d4d4" fill-opacity="0.35"/><rect x="26" y="28" width="1" height="2" fill="#d4d4d4" fill-opacity="0.35"/><rect x="27" y="28" width="1" height="2" fill="#d4d4d4" fill-opacity="0.35"/><rect x="28" y="28" width="1" height="2" fill="#d4d4d4" fill-opacity="0.35"/><rect x="29" y="28" width="1" height="2" fill="#d4d4d4" fill-opacity="0.35"/><rect x="30" y="28" width="1" height="2" fill="#d4d4d4" fill-opacity="0.35"/><rect x="31" y="28" width="1" height="2" fill="#d4d4d4" fill-opacity="0.35"/><rect x="32" y="28" width="1" height="2" fill="#d4d4d4" fill-opacity="0.35"/><rect x="34" y="28" width="1" height="2" fill="#d4d4d4" fill-opacity="0.22"/><rect x="35" y="28" width="1" height="2" fill="#d4d4d4" fill-opacity="0.35"/><rect x="36" y="28" width="1" height="2" fill="#d4d4d4" fill-opacity="0.35"/><rect x="37" y="28" width="1" height="2" fill="#d4d4d4" fill-opacity="0.35"/><rect x="38" y="28" width="1" height="2" fill="#d4d4d4" fill-opacity="0.35"/><rect x="39" y="28" width="1" height="2" fill="#d4d4d4" fill-opacity="0.35"/><rect x="40" y="28" width="1" height="2" fill="#d4d4d4" fill-opacity="0.35"/><rect x="0" y="30" width="1" height="2" fill="#d4d4d4" fill-opacity="0.35"/><rect x="2" y="30" width="1" height="2" fill="#d4d4d4" fill-opacity="0.45"/><rect x="9" y="30" width="1" height="2" fill="#d4d4d4" fill-opacity="0.35"/><rect x="11" y="30" width="1" height="2" fill="#d4d4d4" fill-opacity="0.75"/><rect x="12" y="30" width="1" height="2" fill="#d4d4d4" fill-opacity="0.60"/><rect x="13" y="30" width="1" height="2" fill="#d4d4d4" fill-opacity="0.60"/><rect x="15" y="30" width="1" height="2" fill="#d4d4d4" fill-opacity="0.35"/><rect x="17" y="30" width="1" height="2" fill="#ce9178" fill-opacity="0.22"/><rect x="18" y="30" width="1" height="2" fill="#ce9178" fill-opacity="0.60"/><rect x="19" y="30" width="1" height="2" fill="#ce9178" fill-opacity="0.60"/><rect x="21" y="30" width="1" height="2" fill="#ce9178" fill-opacity="0.75"/><rect x="22" y="30" width="1" height="2" fill="#ce9178" fill-opacity="0.35"/><rect x="23" y="30" width="1" height="2" fill="#ce9178" fill-opacity="0.60"/><rect x="24" y="30" width="1" height="2" fill="#ce9178" fill-opacity="0.60"/><rect x="25" y="30" width="1" height="2" fill="#ce9178" fill-opacity="0.60"/><rect x="26" y="30" width="1" height="2" fill="#ce9178" fill-opacity="0.60"/><rect x="27" y="30" width="1" height="2" fill="#ce9178" fill-opacity="0.60"/><rect x="28" y="30" width="1" height="2" fill="#ce9178" fill-opacity="0.60"/><rect x="29" y="30" width="1" height="2" fill="#ce9178" fill-opacity="0.45"/><rect x="30" y="30" width="1" height="2" fill="#ce9178" fill-opacity="0.22"/><rect x="31" y="30" width="1" height="2" fill="#ce9178" fill-opacity="0.60"/><rect x="32" y="30" width="1" height="2" fill="#ce9178" fill-opacity="0.60"/><rect x="33" y="30" width="1" height="2" fill="#ce9178" fill-opacity="0.60"/><rect x="34" y="30" width="1" height="2" fill="#ce9178" fill-opacity="0.45"/><rect x="35" y="30" width="1" height="2" fill="#ce9178" fill-opacity="0.60"/><rect x="36" y="30" width="1" height="2" fill="#ce9178" fill-opacity="0.60"/><rect x="37" y="30" width="1" height="2" fill="#ce9178" fill-opacity="0.45"/><rect x="38" y="30" width="1" height="2" fill="#ce9178" fill-opacity="0.22"/><rect x="39" y="30" width="1" height="2" fill="#ce9178" fill-opacity="0.60"/><rect x="40" y="30" width="1" height="2" fill="#ce9178" fill-opacity="0.60"/><rect x="41" y="30" width="1" height="2" fill="#ce9178" fill-opacity="0.45"/><rect x="42" y="30" width="1" height="2" fill="#ce9178" fill-opacity="0.60"/><rect x="43" y="30" width="1" height="2" fill="#ce9178" fill-opacity="0.35"/><rect x="44" y="30" width="1" height="2" fill="#ce9178" fill-opacity="0.35"/><rect x="45" y="30" width="1" height="2" fill="#ce9178" fill-opacity="0.60"/><rect x="46" y="30" width="1" height="2" fill="#ce9178" fill-opacity="0.60"/><rect x="47" y="30" width="1" height="2" fill="#ce9178" fill-opacity="0.60"/><rect x="49" y="30" width="1" height="2" fill="#ce9178" fill-opacity="0.75"/><rect x="50" y="30" width="1" height="2" fill="#ce9178" fill-opacity="0.75"/><rect x="52" y="30" width="1" height="2" fill="#ce9178" fill-opacity="0.60"/><rect x="53" y="30" width="1" height="2" fill="#ce9178" fill-opacity="0.60"/><rect x="54" y="30" width="1" height="2" fill="#ce9178" fill-opacity="0.60"/><rect x="55" y="30" width="1" height="2" fill="#ce9178" fill-opacity="0.60"/><rect x="57" y="30" width="1" height="2" fill="#ce9178" fill-opacity="0.60"/><rect x="58" y="30" width="1" height="2" fill="#ce9178" fill-opacity="0.60"/><rect x="59" y="30" width="1" height="2" fill="#ce9178" fill-opacity="0.60"/><rect x="60" y="30" width="1" height="2" fill="#ce9178" fill-opacity="0.22"/><rect x="61" y="30" width="1" height="2" fill="#ce9178" fill-opacity="0.45"/><rect x="62" y="30" width="1" height="2" fill="#ce9178" fill-opacity="0.60"/><rect x="63" y="30" width="1" height="2" fill="#ce9178" fill-opacity="0.22"/><rect x="65" y="30" width="1" height="2" fill="#d4d4d4" fill-opacity="0.35"/><rect x="67" y="30" width="1" height="2" fill="#d4d4d4" fill-opacity="0.60"/><rect x="68" y="30" width="1" height="2" fill="#d4d4d4" fill-opacity="0.60"/><rect x="69" y="30" width="1" height="2" fill="#d4d4d4" fill-opacity="0.60"/><rect x="70" y="30" width="1" height="2" fill="#d4d4d4" fill-opacity="0.60"/><rect x="71" y="30" width="1" height="2" fill="#d4d4d4" fill-opacity="0.60"/><rect x="72" y="30" width="1" height="2" fill="#d4d4d4" fill-opacity="0.60"/></svg>
<!-- /EDITOR -->
<!-- PANEL -->
<div class="abs" style="left:475px;top:611px;width:152px;height:34px;border-top:1px solid #c8c8c8;border-right:1px solid #262626"></div>
<svg class="abs" style="left:377px;top:621px" width="11" height="11" viewBox="0 0 11 11"><circle cx="5.5" cy="5.5" r="5.3" fill="#e0e0e0"/><rect x="4.6" y="2" width="1.8" height="4.6" fill="#1e1e1e"/><rect x="4.6" y="7.6" width="1.8" height="1.6" fill="#1e1e1e"/></svg>
<div class="abs" style="left:392px;top:612px;height:30px;line-height:30px;font-size:13px;color:#e0e0e0;white-space:nowrap">Problems</div>
<svg class="abs" style="left:484px;top:622px" width="13" height="11" viewBox="0 0 13 11"><path d="M1 3 L4 5.8 L1 8.6" fill="none" stroke="#ffffff" stroke-width="1.2"/><path d="M5 9.6 H12" stroke="#ffffff" stroke-width="1.2"/></svg>
<div class="abs" style="left:500px;top:613px;height:30px;line-height:30px;font-size:13px;color:#ffffff;white-space:nowrap">nodejs terminal 0</div>
<svg class="abs" style="left:608px;top:623px" width="9" height="9" viewBox="0 0 9 9"><path d="M1 1 L8 8 M8 1 L1 8" stroke="#e0e0e0" stroke-width="1.3"/></svg>
<div class="term" style="top:650px">bash-4.4 /projects $ cd nodejs-web-app/</div>
<div class="term" style="top:666px">bash-4.4 /projects/nodejs-web-app $ git checkout -b test</div>
<div class="term" style="top:682px">Switched to a new branch 'test'</div>
<div class="term" style="top:698px">bash-4.4 /projects/nodejs-web-app $ </div>
<div class="abs" style="left:697px;top:697px;width:9px;height:16px;border:1px solid #d8d8d8"></div>

<!-- STATUS -->
<svg class="abs" style="left:14px;top:967px" width="160" height="16" viewBox="0 0 160 16">
 <circle cx="5" cy="3.8" r="1.5" fill="none" stroke="#ffffff" stroke-width="1.2"/>
 <circle cx="5" cy="11.7" r="1.5" fill="none" stroke="#ffffff" stroke-width="1.2"/>
 <circle cx="10.3" cy="4.6" r="1.4" fill="none" stroke="#ffffff" stroke-width="1.2"/>
 <path d="M5 5.3 V10.2 M10.3 6 C10.3 9 6 8.5 5.2 10.4" fill="none" stroke="#ffffff" stroke-width="1.3"/>
 <path d="M65.5 11.8 H64.3 A2.6 2.6 0 0 1 64 6.6 A3.7 3.7 0 0 1 71.2 6 A2.9 2.9 0 0 1 71.6 11.8 H70.2" fill="none" stroke="#ffffff" stroke-width="1.3"/>
 <path d="M67.9 13 V7.8" stroke="#ffffff" stroke-width="1.8"/>
 <path d="M65.3 9.6 L67.9 6.6 L70.5 9.6 Z" fill="#ffffff"/>
 <circle cx="91.3" cy="7.6" r="5.1" fill="#ffffff"/>
 <path d="M89.4 5.7 L93.2 9.5 M93.2 5.7 L89.4 9.5" stroke="#1b77d4" stroke-width="1.5"/>
 <path d="M115 2.2 L121 12.7 H109 Z" fill="#ffffff"/>
 <rect x="114.2" y="5.6" width="1.6" height="3.4" fill="#1b77d4"/><rect x="114.2" y="10" width="1.6" height="1.5" fill="#1b77d4"/>
 <rect x="144.3" y="3.6" width="6.4" height="4.6" rx="2.3" fill="none" stroke="#ffffff" stroke-width="1.1"/>
 <rect x="148" y="6.8" width="6.2" height="4.6" rx="2.3" fill="none" stroke="#ffffff" stroke-width="1.1"/>
</svg>
<div class="st" style="left:30px;letter-spacing:0.5px">test*+</div>
<div class="st" style="left:113px">0</div>
<div class="st" style="left:138px">0</div>
<div class="st" style="left:172px;letter-spacing:-0.2px">Previews</div>
<div class="st" style="left:1586px;letter-spacing:-0.25px">Ln 14, Col 26</div>
<div class="st" style="left:1667px;letter-spacing:-0.5px">LF</div>
<div class="st" style="left:1691px;letter-spacing:-0.6px">UTF-8</div>
<div class="st" style="left:1734px;letter-spacing:-0.4px">Spaces: 4</div>
<div class="st" style="left:1796px;letter-spacing:0.45px">Markdown</div>
<svg class="abs" style="left:1864px;top:967px" width="41" height="16" viewBox="0 0 41 16">
 <path d="M2.5 11.5 C3.5 10.5 3.5 9 3.5 7 A4 4 0 0 1 11.5 7 C11.5 9 11.5 10.5 12.5 11.5 Z" fill="#ffffff"/>
 <circle cx="7.5" cy="12.6" r="1.5" fill="#ffffff"/><rect x="6.8" y="2" width="1.4" height="1.5" fill="#ffffff"/>
 <rect x="29.5" y="4" width="12" height="9" fill="none" stroke="#ffffff" stroke-width="1.6"/>
 <rect x="29.5" y="4" width="12" height="2.4" fill="#ffffff"/>
</svg>

<!-- ARROWS -->
<svg class="abs" style="left:0;top:0;pointer-events:none" width="1905" height="984" viewBox="0 0 1905 984">
 <path d="M402.3 498 L183 242" stroke="#ff0000" stroke-width="2.6" stroke-linecap="round"/>
 <path d="M178 236 L186.8 239.9 L181.3 245.9 Z" fill="#ff0000" stroke="#ff0000" stroke-width="1.2" stroke-linejoin="round"/>
 <path d="M413.9 502.9 L49 956.5" stroke="#ff0000" stroke-width="2.8" stroke-linecap="round"/>
 <path d="M44 963.8 L46.5 953.3 L52.6 957.9 Z" fill="#ff0000" stroke="#ff0000" stroke-width="1.2" stroke-linejoin="round"/>
</svg>

</div>
</body></html>
